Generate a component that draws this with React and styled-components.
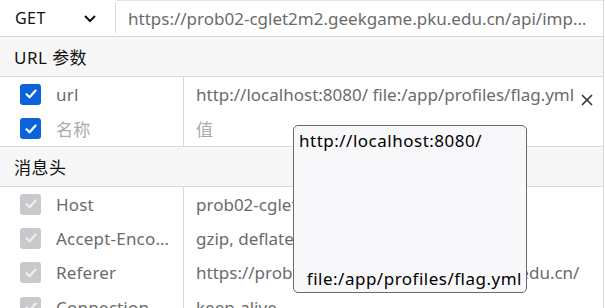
import React from 'react'
import styled, { createGlobalStyle } from 'styled-components'

const Global = createGlobalStyle`
  html, body { margin: 0; padding: 0; background: #fff; overflow: hidden; }
  body {
    font-family: "Noto Sans", "Noto Sans CJK SC", sans-serif;
    letter-spacing: 0.45px;
  }
`

const Page = styled.div`
  position: relative;
  width: 603px;
  height: 308px;
  border-right: 1px solid #d6d6d6;
  overflow: hidden;
`

const TopBar = styled.div`
  display: flex;
  align-items: stretch;
  height: 36px;
  border-bottom: 1px solid #d9d9d9;
`

const Method = styled.div`
  width: 116px;
  display: flex;
  align-items: center;
  justify-content: space-between;
  padding: 0 18px 0 15px;
  box-sizing: border-box;
  font-size: 16px;
  color: #111;
  border-right: 1px solid #d9d9d9;
  margin: 3px 0;
`

const UrlInput = styled.div`
  flex: 1;
  min-width: 0;
  display: flex;
  align-items: center;
  padding: 0 8px 0 12px;
  font-size: 17px;
  letter-spacing: 0;
  color: #6b6b6b;
  border-top: 1px solid #e4e4e4;
  span {
    overflow: hidden;
    white-space: nowrap;
    text-overflow: ellipsis;
  }
`

const Section = styled.div`
  height: 39px;
  display: flex;
  align-items: center;
  padding-left: 14px;
  font-size: 17px;
  color: #111;
  background: #f7f7f7;
  border-bottom: 1px solid #d9d9d9;
`

const Table = styled.div`
  display: grid;
  grid-template-columns: 184px 1fr;
  border-bottom: ${p => (p.$open ? 'none' : '1px solid #d9d9d9')};
`

const NameCell = styled.div`
  height: ${p => p.$h || 34}px;
  display: flex;
  align-items: center;
  gap: 15px;
  padding: 0 4px 0 20px;
  border-right: 1px solid #d9d9d9;
  font-size: 17px;
  letter-spacing: 0.2px;
  color: ${p => (p.$placeholder ? '#aaa' : '#6b6b6b')};
  min-width: 0;
  span {
    overflow: hidden;
    white-space: nowrap;
    text-overflow: ellipsis;
  }
`

const ValueCell = styled.div`
  height: ${p => p.$h || 34}px;
  display: flex;
  align-items: center;
  padding: 0 10px 0 12px;
  font-size: 17px;
  letter-spacing: 0;
  color: ${p => (p.$placeholder ? '#aaa' : '#6b6b6b')};
  min-width: 0;
  span {
    flex: 1;
    overflow: hidden;
    white-space: nowrap;
  }
`

const Box = styled.div`
  flex: none;
  width: 21px;
  height: 21px;
  border-radius: 3px;
  background: ${p => (p.$disabled ? '#c9c9cd' : '#0c62d8')};
  display: flex;
  align-items: center;
  justify-content: center;
`

const Close = styled.div`
  flex: none;
  width: 12px;
  height: 12px;
  margin-left: 4px;
`

const Tooltip = styled.div`
  position: absolute;
  left: 293px;
  top: 125px;
  width: 234px;
  height: 168px;
  box-sizing: border-box;
  background: #f8f8fa;
  border: 1px solid #6a6a6a;
  border-radius: 5px;
  display: flex;
  flex-direction: column;
  justify-content: space-between;
  padding: 3px 4px 2px 5px;
  font-size: 17px;
  letter-spacing: 0.5px;
  color: #000;
  div:last-child { text-align: right; }
`

function Check({ disabled }) {
  return (
    <Box $disabled={disabled}>
      <svg width="14" height="14" viewBox="0 0 14 14">
        <path d="M2.5 7.3 L5.6 10.3 L11.6 3.6" fill="none" stroke={disabled ? '#eee' : '#fff'} strokeWidth="2.2" strokeLinecap="round" strokeLinejoin="round" />
      </svg>
    </Box>
  )
}

function Row({ name, value, placeholder, disabled, close, h }) {
  return (
    <>
      <NameCell $h={h} $placeholder={placeholder}>
        <Check disabled={disabled} />
        <span>{name}</span>
      </NameCell>
      <ValueCell $h={h} $placeholder={placeholder}>
        <span>{value}</span>
        {close && (
          <Close>
            <svg width="12" height="12" viewBox="0 0 12 12">
              <path d="M1 1 L11 11 M11 1 L1 11" stroke="#333" strokeWidth="1.6" />
            </svg>
          </Close>
        )}
      </ValueCell>
    </>
  )
}

export default function App() {
  return (
    <Page>
      <Global />
      <TopBar>
        <Method>
          GET
          <svg width="14" height="9" viewBox="0 0 14 9">
            <path d="M2 2 L7 7 L12 2" fill="none" stroke="#111" strokeWidth="2" />
          </svg>
        </Method>
        <UrlInput>
          <span>https://prob02-cglet2m2.geekgame.pku.edu.cn/api/import-profile-from-url</span>
        </UrlInput>
      </TopBar>
      <Section>URL 参数</Section>
      <Table>
        <Row name="url" value="http://localhost:8080/ file:/app/profiles/flag.yml" close />
        <Row name="名称" value="值" placeholder h={35} />
      </Table>
      <Section>消息头</Section>
      <Table $open>
        <Row name="Host" value="prob02-cglet2m2.geekgame.pku.edu.cn" disabled />
        <Row name="Accept-Encoding" value="gzip, deflate, br" disabled />
        <Row name="Referer" value="https://prob02-cglet2m2.geekgame.pku.edu.cn/" disabled h={35} />
        <Row name="Connection" value="keep-alive" disabled />
      </Table>
      <Tooltip>
        <div>http://localhost:8080/</div>
        <div>file:/app/profiles/flag.yml</div>
      </Tooltip>
    </Page>
  )
}
